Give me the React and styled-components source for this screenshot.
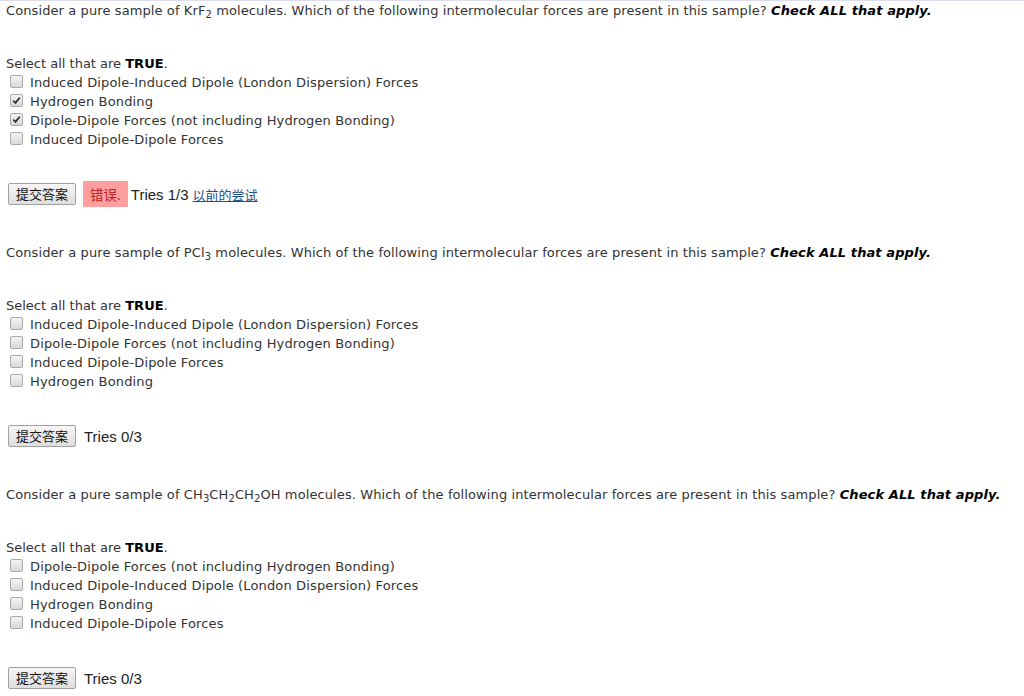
import React from "react";
import styled, { createGlobalStyle } from "styled-components";

const Global = createGlobalStyle`
  html, body { margin: 0; padding: 0; background: #fff; }
  body { font-family: "DejaVu Sans", Verdana, sans-serif; font-size: 13px; color: #333; }
`;

const Page = styled.div`
  border-top: 1px solid #dcdcef;
  padding: 0 6px;
`;

const Block = styled.section`
  padding-bottom: 36px;
`;

const Question = styled.div`
  line-height: 19px;
  margin-bottom: 34px;
  white-space: nowrap;
  letter-spacing: 0.1px;
  sub { font-size: 10px; line-height: 0; vertical-align: -3px; }
`;

const Strong = styled.b`
  color: #000;
  font-style: ${(p) => (p.$italic ? "italic" : "normal")};
`;

const Prompt = styled.div`
  line-height: 19px;
`;

const Options = styled.div`
  display: flex;
  flex-direction: column;
  letter-spacing: 0.14px;
`;

const Option = styled.label`
  display: flex;
  align-items: center;
  height: 19px;
  gap: 7px;
  padding-left: 4px;
`;

const Box = styled.span`
  width: 11px;
  height: 11px;
  margin-top: -2px;
  border: 1px solid #a9a9a9;
  border-radius: 2px;
  background: linear-gradient(#f4f4f4, #d9d9d9);
  display: flex;
  align-items: center;
  justify-content: center;
  flex: none;
`;

const Row = styled.div`
  display: flex;
  align-items: center;
  height: 26px;
  margin-top: 32px;
  padding-left: 2px;
`;

const Button = styled.button`
  font-family: "Noto Sans CJK SC", sans-serif;
  font-size: 13px;
  height: 22px;
  padding: 0 7px;
  border: 1px solid #a0a0a0;
  border-radius: 2px;
  background: linear-gradient(#f6f6f6, #dedede);
  color: #111;
  line-height: 20px;
`;

const Error = styled.span`
  margin-left: 7px;
  height: 26px;
  padding: 0 7px;
  display: flex;
  align-items: center;
  background: #ff9e9e;
  color: #b8232a;
  font-family: "Noto Sans CJK SC", sans-serif;
  font-size: 13.5px;
`;

const Tries = styled.span`
  margin-left: ${(p) => (p.$after ? "3px" : "8px")};
  font-family: "Liberation Sans", Arial, sans-serif;
  font-size: 15px;
  color: #222;
`;

const Link = styled.a`
  margin-left: 4px;
  font-family: "Noto Sans CJK SC", sans-serif;
  font-size: 13px;
  color: #1b4f8c;
  text-decoration: underline;
`;

const Check = () => (
  <svg width="9" height="9" viewBox="0 0 9 9">
    <path d="M1.3 4.6 L3.5 6.9 L7.8 1.6" fill="none" stroke="#333" strokeWidth="1.7" />
  </svg>
);

const questions = [
  {
    formula: <>KrF<sub>2</sub></>,
    options: [
      ["Induced Dipole-Induced Dipole (London Dispersion) Forces", false],
      ["Hydrogen Bonding", true],
      ["Dipole-Dipole Forces (not including Hydrogen Bonding)", true],
      ["Induced Dipole-Dipole Forces", false],
    ],
    tries: "1/3",
    error: true,
  },
  {
    formula: <>PCl<sub>3</sub></>,
    options: [
      ["Induced Dipole-Induced Dipole (London Dispersion) Forces", false],
      ["Dipole-Dipole Forces (not including Hydrogen Bonding)", false],
      ["Induced Dipole-Dipole Forces", false],
      ["Hydrogen Bonding", false],
    ],
    tries: "0/3",
  },
  {
    formula: <>CH<sub>3</sub>CH<sub>2</sub>CH<sub>2</sub>OH</>,
    options: [
      ["Dipole-Dipole Forces (not including Hydrogen Bonding)", false],
      ["Induced Dipole-Induced Dipole (London Dispersion) Forces", false],
      ["Hydrogen Bonding", false],
      ["Induced Dipole-Dipole Forces", false],
    ],
    tries: "0/3",
  },
];

export default function App() {
  return (
    <Page>
      <Global />
      {questions.map((q, i) => (
        <Block key={i}>
          <Question>
            Consider a pure sample of {q.formula} molecules. Which of the following intermolecular forces are present in this sample?{" "}
            <Strong $italic>Check ALL that apply.</Strong>
          </Question>
          <Prompt>
            Select all that are <Strong>TRUE</Strong>.
          </Prompt>
          <Options>
            {q.options.map(([label, checked]) => (
              <Option key={label}>
                <Box>{checked && <Check />}</Box>
                {label}
              </Option>
            ))}
          </Options>
          <Row>
            <Button>提交答案</Button>
            {q.error && <Error>错误.</Error>}
            <Tries $after={q.error}>Tries {q.tries}</Tries>
            {q.error && <Link href="#">以前的尝试</Link>}
          </Row>
        </Block>
      ))}
    </Page>
  );
}
